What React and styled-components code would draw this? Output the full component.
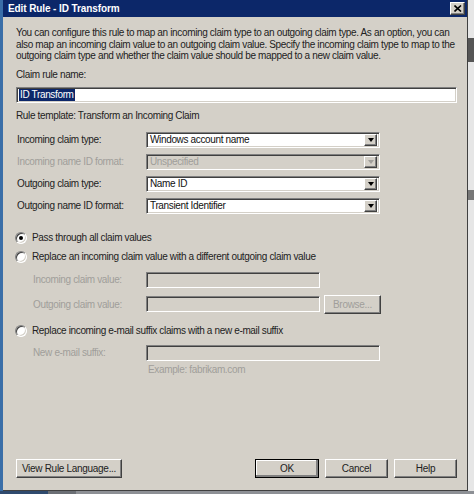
import React from 'react';
import styled, { createGlobalStyle, css } from 'styled-components';

const GlobalStyle = createGlobalStyle`
  html, body {
    margin: 0;
    padding: 0;
    background: #3a6ea5;
  }
  body {
    font-family: "Liberation Sans", Arial, sans-serif;
    font-size: 10px;
    letter-spacing: -0.35px;
    color: #000;
  }
`;

const BG = '#d4d0c8';
const DIM = '#a09e9a';

const sunken = css`
  border: 1px solid;
  border-color: #808080 #fff #fff #808080;
  box-shadow: inset 1px 1px #404040, inset -1px -1px ${BG};
`;

const raised = css`
  border: 1px solid;
  border-color: #fff #404040 #404040 #fff;
  box-shadow: inset -1px -1px #808080, inset 1px 1px ${BG};
`;

const Screen = styled.div`
  width: 474px;
  height: 494px;
  display: flex;
  flex-direction: column;
  overflow: hidden;
`;

const Desktop = styled.div`
  display: flex;
  height: 491px;
`;

const LeftEdge = styled.div`
  width: 3px;
  background: #3a6ea8;
`;

const RightEdge = styled.div`
  flex: 1;
  background: linear-gradient(
    to bottom,
    #e6e6e6 0,
    #e6e6e6 38px,
    #555 38px,
    #555 62px,
    #e6e6e6 62px,
    #e6e6e6 190px,
    #777 190px,
    #777 200px,
    #e6e6e6 200px
  );
`;

const TaskStrip = styled.div`
  flex: 1;
  background: linear-gradient(
    to right,
    #2f4a6e 0,
    #2f4a6e 48px,
    #6b6f75 48px,
    #6b6f75 76px,
    #8d9095 76px
  );
`;

const Dialog = styled.div`
  width: 465px;
  background: ${BG};
  display: flex;
  flex-direction: column;
  border-right: 1px solid #404040;
  border-bottom: 1px solid #404040;
  box-sizing: border-box;
`;

const TitleBar = styled.div`
  height: 17px;
  background: #0c2769;
  display: flex;
  align-items: center;
  justify-content: space-between;
  padding: 0 2px 0 5px;
`;

const Title = styled.span`
  color: #fff;
  font-weight: bold;
  font-size: 10px;
  letter-spacing: -0.1px;
`;

const CloseButton = styled.span`
  width: 13px;
  height: 11px;
  background: ${BG};
  ${raised};
  display: flex;
  align-items: center;
  justify-content: center;
`;

const Body = styled.div`
  flex: 1;
  display: flex;
  flex-direction: column;
  padding: 10px 10px 12px 13px;
`;

const Intro = styled.p`
  margin: 0;
  line-height: 11.5px;
  color: #222;
  white-space: nowrap;
`;

const Label = styled.div`
  line-height: 12px;
  height: 12px;
  color: ${(p) => (p.$disabled ? DIM : '#222')};
  margin-top: ${(p) => p.$top || 0}px;
  padding-left: ${(p) => p.$indent || 0}px;
  white-space: nowrap;
`;

const TextBox = styled.div`
  ${sunken};
  box-sizing: border-box;
  height: 16px;
  width: ${(p) => p.$width || '100%'};
  background: ${(p) => (p.$disabled ? BG : '#fff')};
  margin-top: ${(p) => p.$top || 0}px;
  display: flex;
  align-items: center;
  padding: 0 2px;
`;

const Selected = styled.span`
  background: #0c2769;
  color: #fff;
  line-height: 12px;
  padding: 0 1px;
`;

const FieldGrid = styled.div`
  display: grid;
  grid-template-columns: 130px 234px;
  row-gap: 6px;
  align-items: center;
  margin-top: ${(p) => p.$top || 0}px;
`;

const Combo = styled.div`
  ${sunken};
  box-sizing: border-box;
  height: 16px;
  background: ${(p) => (p.$disabled ? BG : '#fff')};
  color: ${(p) => (p.$disabled ? DIM : '#111')};
  display: flex;
  align-items: center;
  padding: 2px 2px 2px 3px;
`;

const ComboText = styled.span`
  flex: 1;
  line-height: 12px;
`;

const DropButton = styled.span`
  width: 13px;
  height: 12px;
  box-sizing: border-box;
  background: ${BG};
  ${raised};
  display: flex;
  align-items: center;
  justify-content: center;

  &::after {
    content: '';
    border-top: 4px solid ${(p) => (p.$disabled ? DIM : '#000')};
    border-left: 3.5px solid transparent;
    border-right: 3.5px solid transparent;
  }
`;

const RadioRow = styled.label`
  display: flex;
  align-items: center;
  gap: 5px;
  height: 14px;
  margin-top: ${(p) => p.$top || 0}px;
  color: #222;
  white-space: nowrap;
`;

const RadioDot = styled.span`
  width: 12px;
  height: 12px;
  box-sizing: border-box;
  border-radius: 50%;
  background: #fff;
  border: 1px solid;
  border-color: #808080 #fff #fff #808080;
  box-shadow: inset 1px 1px #404040, inset -1px -1px ${BG};
  display: flex;
  align-items: center;
  justify-content: center;
  margin-left: -1px;

  &::after {
    content: '';
    width: 4px;
    height: 4px;
    border-radius: 50%;
    background: ${(p) => (p.$checked ? '#000' : 'transparent')};
  }
`;

const SubRow = styled.div`
  display: flex;
  align-items: center;
  height: ${(p) => p.$height || 16}px;
  margin-top: ${(p) => p.$top || 0}px;
  margin-left: 17px;
`;

const SubLabel = styled.span`
  width: 113px;
  color: ${DIM};
  white-space: nowrap;
`;

const Hint = styled.div`
  margin: 3px 0 0 132px;
  line-height: 12px;
  color: ${DIM};
`;

const Spacer = styled.div`
  flex: 1;
`;

const ButtonBar = styled.div`
  display: flex;
  align-items: center;
  gap: 6px;
`;

const Button = styled.button`
  ${raised};
  box-sizing: border-box;
  height: 19px;
  width: ${(p) => p.$width}px;
  margin-left: ${(p) => p.$left || 0}px;
  background: ${BG};
  font-family: "Liberation Sans", Arial, sans-serif;
  font-size: 10px;
  letter-spacing: -0.3px;
  white-space: nowrap;
  color: ${(p) => (p.$disabled ? DIM : '#222')};
  padding: 0;
  ${(p) =>
    p.$default &&
    css`
      outline: 1px solid #000;
      outline-offset: -1px;
      box-shadow: inset -2px -2px #808080, inset 1px 1px #fff;
    `}
`;

const fields = [
  { label: 'Incoming claim type:', value: 'Windows account name' },
  { label: 'Incoming name ID format:', value: 'Unspecified', disabled: true },
  { label: 'Outgoing claim type:', value: 'Name ID' },
  { label: 'Outgoing name ID format:', value: 'Transient Identifier' },
];

const App = () => (
  <>
    <GlobalStyle />
    <Screen>
      <Desktop>
        <LeftEdge />
        <Dialog>
          <TitleBar>
            <Title>Edit Rule - ID Transform</Title>
            <CloseButton>
              <svg width="8" height="7" viewBox="0 0 8 7">
                <path d="M0.5 0.5 L7 6.5 M7 0.5 L0.5 6.5" stroke="#000" strokeWidth="1.6" />
              </svg>
            </CloseButton>
          </TitleBar>
          <Body>
            <Intro>
              You can configure this rule to map an incoming claim type to an outgoing claim type. As an option, you can
              <br />
              also map an incoming claim value to an outgoing claim value. Specify the incoming claim type to map to the
              <br />
              outgoing claim type and whether the claim value should be mapped to a new claim value.
            </Intro>
            <Label $top={7}>Claim rule name:</Label>
            <TextBox $top={6}>
              <Selected>ID Transform</Selected>
            </TextBox>
            <Label $top={7}>Rule template: Transform an Incoming Claim</Label>
            <FieldGrid $top={10}>
              {fields.map((f) => (
                <React.Fragment key={f.label}>
                  <Label $disabled={f.disabled} $indent={1}>
                    {f.label}
                  </Label>
                  <Combo $disabled={f.disabled}>
                    <ComboText>{f.value}</ComboText>
                    <DropButton $disabled={f.disabled} />
                  </Combo>
                </React.Fragment>
              ))}
            </FieldGrid>
            <RadioRow $top={17}>
              <RadioDot $checked />
              Pass through all claim values
            </RadioRow>
            <RadioRow $top={5}>
              <RadioDot />
              Replace an incoming claim value with a different outgoing claim value
            </RadioRow>
            <SubRow $top={8}>
              <SubLabel>Incoming claim value:</SubLabel>
              <TextBox $disabled $width="174px" />
            </SubRow>
            <SubRow $top={7} $height={19}>
              <SubLabel>Outgoing claim value:</SubLabel>
              <TextBox $disabled $width="174px" />
              <Button $width={57} $left={4} $disabled>
                Browse...
              </Button>
            </SubRow>
            <RadioRow $top={10}>
              <RadioDot />
              Replace incoming e-mail suffix claims with a new e-mail suffix
            </RadioRow>
            <SubRow $top={7}>
              <SubLabel>New e-mail suffix:</SubLabel>
              <TextBox $disabled $width="234px" />
            </SubRow>
            <Hint>Example: fabrikam.com</Hint>
            <Spacer />
            <ButtonBar>
              <Button $width={106}>View Rule Language...</Button>
              <Spacer />
              <Button $width={64} $default>
                OK
              </Button>
              <Button $width={63}>Cancel</Button>
              <Button $width={63}>Help</Button>
            </ButtonBar>
          </Body>
        </Dialog>
        <RightEdge />
      </Desktop>
      <TaskStrip />
    </Screen>
  </>
);

export default App;
